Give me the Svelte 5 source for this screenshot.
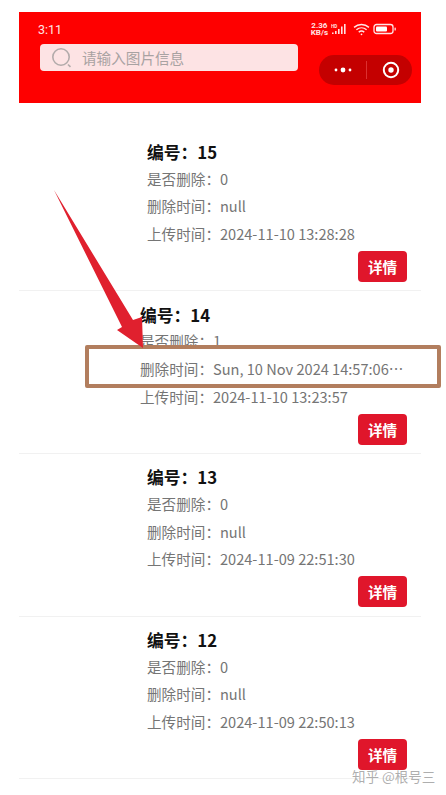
<script>
  const items = [
    { id: 15, del: 0, time: 'null', up: '2024-11-10 13:28:28' },
    { id: 14, del: 1, time: 'Sun, 10 Nov 2024 14:57:06 GMT', up: '2024-11-10 13:23:57', shift: true },
    { id: 13, del: 0, time: 'null', up: '2024-11-09 22:51:30' },
    { id: 12, del: 0, time: 'null', up: '2024-11-09 22:50:13' },
    { id: 11, del: 0, time: 'null', up: '2024-11-09 22:48:02' }
  ];
</script>

<div class="page">
  <header class="head">
    <div class="status">
      <span class="clock">3:11</span>
      <div class="sys">
        <span class="speed">2.36<br />KB/s</span>
        <svg width="19" height="12" viewBox="0 0 19 12">
          <text x="0" y="4.500" class="hd">HD</text>
          <path d="M1 9.500h1.600v1.500H1zM4 8h1.600v3H4zM7 6h1.600v5H7zM10 3.500h1.600V11H10zM13 1h1.600v10H13z" fill="#ffe0e0" />
        </svg>
        <svg width="17" height="13" viewBox="0 0 16 12" fill="none" stroke="#ffe6e6" stroke-width="1.300">
          <path d="M1 4c4-3.600 10-3.600 14 0M3.200 6.300c2.800-2.400 6.800-2.400 9.600 0M5.400 8.500c1.500-1.200 3.700-1.200 5.200 0" />
          <circle cx="8" cy="10.500" r="0.800" fill="#ffe6e6" stroke="none" />
        </svg>
        <svg class="batt" width="24" height="12" viewBox="0 0 24 12">
          <rect x="1" y="1.500" width="19" height="9" rx="2.500" fill="none" stroke="#ffe6e6" stroke-width="1.300" />
          <rect x="3" y="3.500" width="11" height="5" rx="1" fill="#fff" />
          <rect x="21.500" y="4.500" width="1.300" height="3" rx="0.600" fill="#ffe6e6" />
        </svg>
      </div>
    </div>
    <div class="bar">
      <div class="search">
        <svg width="24" height="24" viewBox="0 0 24 24" fill="none" stroke="#b3abab" stroke-width="1.600">
          <circle cx="11" cy="11" r="8.200" />
          <path d="M18 18.500l2.500 2.300" />
        </svg>
        <span>请输入图片信息</span>
      </div>
      <div class="capsule">
        <svg class="dots" width="20" height="8" viewBox="0 0 20 8" fill="#fff">
          <circle cx="3" cy="4" r="1.400" />
          <circle cx="10" cy="4" r="2.400" />
          <circle cx="17" cy="4" r="1.400" />
        </svg>
        <span class="sep"></span>
        <svg class="target" width="18" height="18" viewBox="0 0 18 18">
          <circle cx="9" cy="9" r="7.200" fill="none" stroke="#fff" stroke-width="2" />
          <circle cx="9" cy="9" r="2.700" fill="#fff" />
        </svg>
      </div>
    </div>
  </header>

  <ul class="list">
    {#each items as item}
      <li class="row">
        <div class="info" class:shift={item.shift}>
          <h3>编号：{item.id}</h3>
          <p>是否删除：{item.del}</p>
          <p class="ellipsis">删除时间：{item.time}</p>
          <p>上传时间：{item.up}</p>
        </div>
        <button type="button">详情</button>
      </li>
    {/each}
  </ul>

  <div class="frame"></div>
  <svg class="arrow" width="92" height="160" viewBox="0 0 92 160">
    <path d="M0 0 L79 130 L88 127 L89 158 L63 140 L68 137 Z" fill="#e0202e" />
  </svg>
  <span class="mark">知乎 @根号三</span>
</div>

<style>
  :global(body) {
    margin: 0;
    background: #fff;
  }
  .page {
    position: relative;
    width: 446px;
    height: 795px;
    overflow: hidden;
    padding: 12px 25px 0 19px;
    box-sizing: border-box;
    background: #fff;
    font-family: "Noto Sans CJK SC", "Noto Sans", sans-serif;
  }
  .head {
    height: 91px;
    background: #fe0000;
    padding: 9px 11px 0 19px;
    box-sizing: border-box;
  }
  .status {
    display: flex;
    justify-content: space-between;
    align-items: center;
    height: 16px;
    margin-right: 13px;
    color: #ffe4e4;
  }
  .clock {
    font: 12.500px "Roboto", sans-serif;
  }
  .sys {
    display: flex;
    align-items: center;
    gap: 3px;
  }
  .speed {
    font: 700 8px/7.500px "Roboto", sans-serif;
    text-align: center;
  }
  .hd {
    font: 700 4.500px "Roboto", sans-serif;
    fill: #ffe0e0;
  }
  .bar {
    display: flex;
    justify-content: space-between;
  }
  .search {
    width: 258px;
    height: 27px;
    margin: 7px 0 0 2px;
    background: #fde3e4;
    border-radius: 4px;
    display: flex;
    align-items: center;
    gap: 8px;
    padding-left: 10px;
    box-sizing: border-box;
    color: #a8a2a2;
    font-size: 14.600px;
  }
  .capsule {
    width: 93px;
    height: 30px;
    margin-top: 18px;
    margin-right: -2px;
    border-radius: 15px;
    background: #c40000;
    display: flex;
    align-items: center;
  }
  .dots {
    margin-left: 14px;
  }
  .sep {
    width: 1px;
    height: 18px;
    margin: 0 15px 0 13px;
    background: #dc3030;
  }
  .list {
    list-style: none;
    margin: 25.500px 0 0;
    padding: 0;
  }
  .row {
    height: 162.700px;
    border-bottom: 1px solid #f1f1f1;
    box-sizing: border-box;
    padding: 10.500px 14px 0 128px;
    display: flex;
    flex-direction: column;
  }
  .info {
    width: 270px;
    color: #757575;
    font-size: 14.600px;
  }
  .info.shift {
    margin-left: -7px;
  }
  h3 {
    margin: 0 0 -0.500px;
    font-size: 16.800px;
    line-height: 26px;
    font-weight: 700;
    color: #111;
  }
  p {
    margin: 0;
    height: 27.800px;
    line-height: 27.800px;
    white-space: nowrap;
  }
  .ellipsis {
    width: 265px;
    overflow: hidden;
    text-overflow: ellipsis;
  }
  button {
    align-self: flex-end;
    width: 49px;
    height: 31px;
    margin-top: 3px;
    border: 0;
    padding: 0;
    border-radius: 4px;
    background: #e0162b;
    color: #fff;
    font: 700 14.600px "Noto Sans CJK SC", sans-serif;
  }
  .frame {
    position: absolute;
    left: 85px;
    top: 345px;
    width: 356px;
    height: 43px;
    box-sizing: border-box;
    border: 4px solid #b27e5e;
    border-radius: 2px;
  }
  .arrow {
    position: absolute;
    left: 54px;
    top: 190px;
  }
  .mark {
    position: absolute;
    left: 352px;
    top: 766px;
    font-size: 13.500px;
    color: rgba(120, 120, 120, 0.6);
    text-shadow: 0 0 1px rgba(255, 255, 255, 0.8);
  }
</style>
